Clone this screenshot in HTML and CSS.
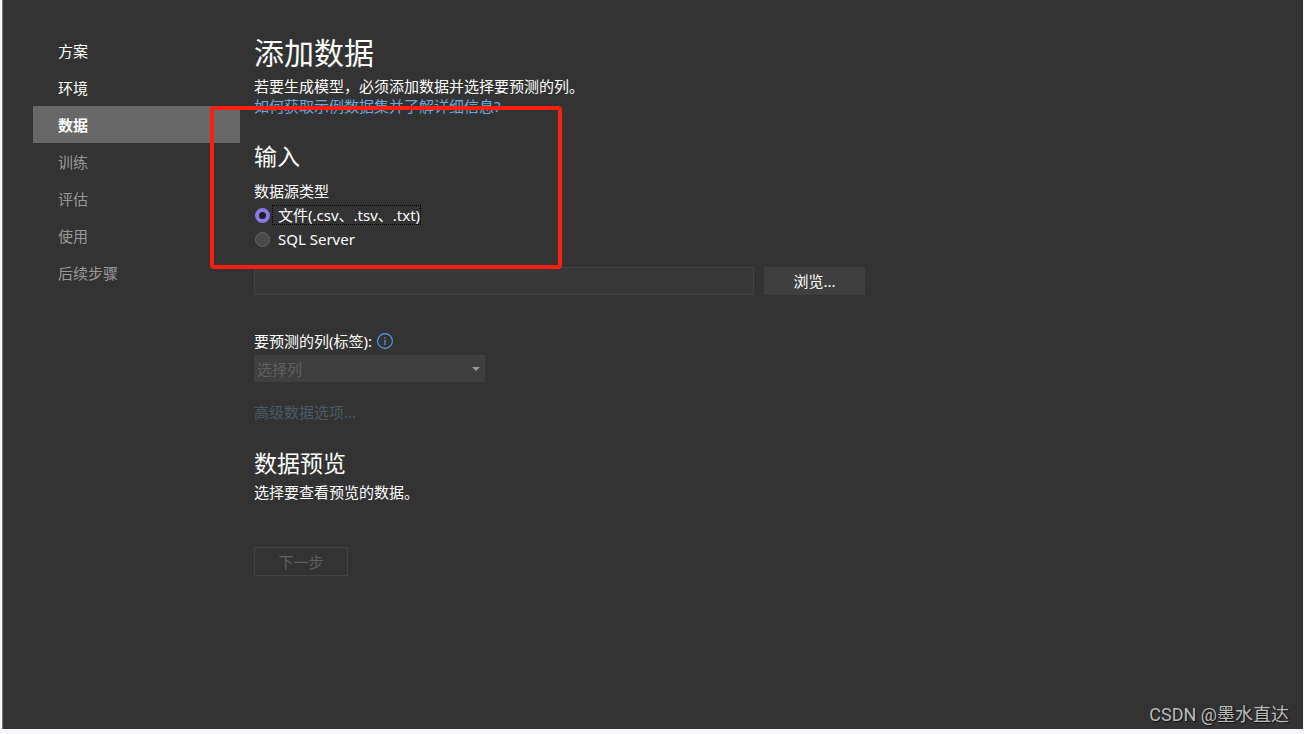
FILE: index.html
```
<!DOCTYPE html>
<html lang="zh-CN">
<head>
    <meta charset="UTF-8">
    <title>添加数据</title>
    <link rel="stylesheet" href="styles.css">
</head>
<body>
    <div class="window">
        <nav class="steps">
            <a href="#scenario">方案</a>
            <a href="#environment">环境</a>
            <a href="#data" class="active">数据</a>
            <a href="#train" class="pending">训练</a>
            <a href="#evaluate" class="pending">评估</a>
            <a href="#consume" class="pending">使用</a>
            <a href="#next" class="pending">后续步骤</a>
        </nav>

        <main class="content">
            <h1>添加数据</h1>
            <p>若要生成模型，必须添加数据并选择要预测的列。</p>
            <a href="#samples" class="help-link">如何获取示例数据集并了解详细信息?</a>

            <section class="input-section">
                <h2>输入</h2>
                <fieldset>
                    <legend>数据源类型</legend>
                    <div class="option">
                        <input type="radio" name="source" id="sourceFile" checked>
                        <label for="sourceFile" class="focused">文件(.csv、.tsv、.txt)</label>
                    </div>
                    <div class="option">
                        <input type="radio" name="source" id="sourceSql">
                        <label for="sourceSql">SQL Server</label>
                    </div>
                </fieldset>
                <div class="highlight"></div>
            </section>

            <div class="file-row">
                <input type="text" id="filePath" aria-label="文件路径">
                <button type="button" class="browse">浏览...</button>
            </div>

            <div class="label-row">
                <label for="column">要预测的列(标签):</label>
                <svg class="info" width="16" height="16" viewBox="0 0 16 16">
                    <circle cx="8" cy="8" r="7.4" fill="none" stroke="#55a0ee" stroke-width="1.1"/>
                    <path d="M8 6.5V12" stroke="#55a0ee" stroke-width="1.1"/>
                    <rect x="7.4" y="4" width="1.2" height="1.3" fill="#55a0ee"/>
                </svg>
            </div>
            <div class="select-box">
                <select id="column" disabled>
                    <option>选择列</option>
                </select>
            </div>

            <a href="#advanced" class="advanced-link">高级数据选项...</a>

            <h2>数据预览</h2>
            <p>选择要查看预览的数据。</p>

            <button type="button" class="next" disabled>下一步</button>
        </main>

        <div class="watermark">CSDN @墨水直达</div>
    </div>
</body>
</html>
```
FILE: styles.css
```
* {
    margin: 0;
    padding: 0;
    box-sizing: border-box;
}

body {
    font-family: "Noto Sans", "Noto Sans CJK SC", sans-serif;
    font-size: 15px;
    line-height: 20px;
    color: #fff;
    background: #f7f7fc;
    min-height: 100vh;
    display: flex;
    padding: 0 1px 5px 2px;
}

.window {
    position: relative;
    flex: 1;
    display: flex;
    gap: 14px;
    padding: 32px 30px;
    background: #333;
    border-left: 1px solid #707070;
}

a {
    text-decoration: none;
}

/* Left step list */
.steps {
    width: 207px;
    display: flex;
    flex-direction: column;
}

.steps a {
    height: 37px;
    line-height: 38px;
    padding-left: 25px;
    color: #fff;
}

.steps a.active {
    background: #686868;
    font-weight: bold;
}

.steps a.pending {
    color: #999;
}

/* Main column */
.content {
    flex: 1;
    display: flex;
    flex-direction: column;
    align-items: flex-start;
}

h1 {
    font-size: 30px;
    line-height: 42px;
    font-weight: normal;
    margin-bottom: 2px;
}

h2 {
    font-size: 23px;
    line-height: 32px;
    font-weight: normal;
    margin-bottom: 3px;
}

.help-link {
    color: #6ca8dc;
}

.input-section {
    position: relative;
    margin: 24px 0 16px;
}

.input-section h2 {
    margin-bottom: 9px;
}

fieldset {
    border: none;
}

legend {
    margin-bottom: 2px;
}

.option {
    display: flex;
    align-items: center;
    height: 24px;
}

.option input {
    appearance: none;
    width: 15px;
    height: 15px;
    margin: 0 2px 0 1px;
    border: 1px solid #666;
    border-radius: 50%;
    background: #4a4a4a;
}

.option input:checked {
    border: 4px solid #8a78e8;
    background: #1f1f1f;
}

.option label {
    padding: 0 0 0 5px;
    line-height: 18px;
    border: 1px dotted transparent;
}

.option label.focused {
    border-color: #000;
}

/* Red marker around the data source choice */
.highlight {
    position: absolute;
    top: -34px;
    left: -44px;
    width: 352px;
    height: 163px;
    border: 4px solid #ff1e10;
    border-radius: 4px;
    pointer-events: none;
}

.file-row {
    display: flex;
    gap: 10px;
    margin-bottom: 36px;
}

.file-row input {
    width: 500px;
    height: 28px;
    padding: 0 4px;
    font: inherit;
    color: #fff;
    background: #383838;
    border: 1px solid #434343;
}

button {
    font: inherit;
    color: #fff;
}

.browse {
    width: 101px;
    height: 28px;
    background: #3f3f3f;
    border: none;
}

.label-row {
    display: flex;
    align-items: center;
    gap: 5px;
    margin-bottom: 4px;
}

.select-box {
    position: relative;
    width: 231px;
    margin-bottom: 20px;
}

.select-box::after {
    content: "";
    position: absolute;
    top: 12px;
    right: 5px;
    border: 4px solid transparent;
    border-top-color: #999;
    border-bottom: none;
}

select {
    display: block;
    appearance: none;
    width: 100%;
    height: 27px;
    padding: 0 3px;
    font: inherit;
    color: #606060;
    background: #3f3f3f;
    border: none;
    opacity: 1;
}

.advanced-link {
    color: #4a5a68;
    margin-bottom: 25px;
}

.next {
    width: 94px;
    height: 29px;
    margin-top: 45px;
    color: #606060;
    background: #333;
    border: 1px solid #434343;
}

.watermark {
    position: absolute;
    right: 14px;
    bottom: 4px;
    font-family: Roboto, "Noto Sans CJK SC", sans-serif;
    font-size: 18px;
    color: #bbb;
    text-shadow: 1px 1px 1px #111;
}
```
